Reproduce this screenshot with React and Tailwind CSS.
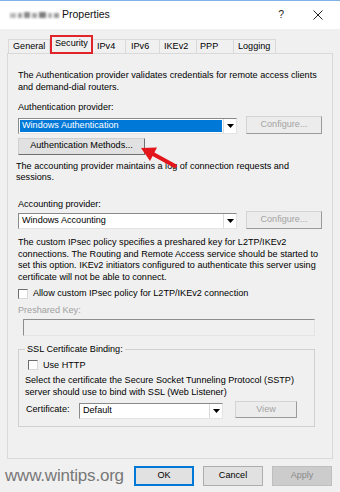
import React from "react";

const font = "font-['Liberation_Sans',Arial,sans-serif]";

function Check({ className = "" }) {
  return (
    <span
      className={`inline-block w-[10px] h-[10px] bg-white border border-[#6d6d6d] border-r-[#d8d8d8] border-b-[#d8d8d8] shrink-0 ${className}`}
    />
  );
}

function Arrow() {
  return (
    <span className="w-[13px] h-full flex items-center justify-center bg-white border-l border-[#dadada] shrink-0">
      <svg width="7" height="4" viewBox="0 0 7 4">
        <path d="M0 0 H7 L3.5 4 Z" fill="#000" />
      </svg>
    </span>
  );
}

function DisabledBtn({ label, className = "" }) {
  return (
    <div
      className={`flex items-center justify-center bg-[#ececec] border border-[#d4d4d4] border-r-[#9a9a9a] border-b-[#9a9a9a] text-[#a3a3a3] ${className}`}
    >
      {label}
    </div>
  );
}

export default function App() {
  return (
    <div className={`relative w-[340px] h-[492px] overflow-hidden bg-[#f0f0f0] text-[9.1px] leading-[11.5px] text-black ${font}`}>
      {/* title bar */}
      <div className="h-[29px] bg-white border-t border-[#7fb2e5] flex items-center">
        <div className="ml-[10px] flex items-center gap-[2px] w-[50px] blur-[1px]">
          <span className="w-[6px] h-[5px] bg-[#b9b9b9]" />
          <span className="w-[4px] h-[5px] bg-[#9e9e9e]" />
          <span className="w-[6px] h-[6px] bg-[#8a8a8a]" />
          <span className="w-[5px] h-[5px] bg-[#a5a5a5]" />
          <span className="w-[7px] h-[6px] bg-[#7e7e7e]" />
          <span className="w-[4px] h-[5px] bg-[#b0b0b0]" />
          <span className="w-[5px] h-[5px] bg-[#9a9a9a]" />
        </div>
        <span className="ml-[2px] text-[10.5px] text-[#111]">Properties</span>
        <span className="ml-auto mr-[29px] text-[10.5px] text-[#222]">?</span>
        <svg className="mr-[17px]" width="10" height="10" viewBox="0 0 10 10">
          <path d="M0.5 0.5 L9.5 9.5 M9.5 0.5 L0.5 9.5" stroke="#222" strokeWidth="1" />
        </svg>
      </div>

      {/* tabs */}
      <div className="h-[24px] flex items-end pl-[8px]">
        <div className="h-[14px] w-[42px] border border-b-0 border-[#d9d9d9] pl-[4px] flex items-center">General</div>
        <div className="relative z-10 -mb-[1px] h-[19px] w-[43px] border-2 border-[#e0242a] bg-[#f0f0f0] pl-[3px] flex items-start pt-[1px]">Security</div>
        <div className="h-[14px] w-[33px] border border-b-0 border-l-0 border-[#d9d9d9] pl-[4px] flex items-center">IPv4</div>
        <div className="h-[14px] w-[34px] border border-b-0 border-l-0 border-[#d9d9d9] pl-[5px] flex items-center">IPv6</div>
        <div className="h-[14px] w-[37px] border border-b-0 border-l-0 border-[#d9d9d9] pl-[4px] flex items-center">IKEv2</div>
        <div className="h-[14px] w-[37px] border border-b-0 border-l-0 border-[#d9d9d9] pl-[3px] flex items-center">PPP</div>
        <div className="h-[14px] w-[42px] border border-b-0 border-l-0 border-[#d9d9d9] pl-[4px] flex items-center">Logging</div>
      </div>

      {/* panel */}
      <div className="ml-[7px] w-[326px] h-[406px] border border-[#d9d9d9] bg-[#f0f0f0] pl-[10px] pr-[10px] flex flex-col">
        <p className="mt-[16px]">
          The Authentication provider validates credentials for remote access clients
          <br />
          and demand-dial routers.
        </p>
        <p className="mt-[9px]">Authentication provider:</p>
        <div className="mt-[2px] flex items-end h-[18px]">
          <div className="w-[219px] h-[16px] flex bg-white border border-[#8a8a8a] border-r-[#e3e3e3] border-b-[#e3e3e3]">
            <div className="flex-1 m-[1px] bg-[#0078d7] text-white pl-[2px] flex items-center">Windows Authentication</div>
            <Arrow />
          </div>
          <DisabledBtn label="Configure..." className="ml-[9px] w-[76px] h-[18px]" />
        </div>
        <div className="mt-[4px] w-[127px] h-[17px] bg-[#e1e1e1] border border-[#d0d0d0] border-r-[#6f6f6f] border-b-[#6f6f6f] flex items-center justify-center">
          Authentication Methods...
        </div>
        <p className="mt-[6px] -ml-[2px]">
          The accounting provider maintains a log of connection requests and
          <br />
          sessions.
        </p>
        <p className="mt-[15px]">Accounting provider:</p>
        <div className="mt-[1px] flex items-end h-[18px]">
          <div className="w-[219px] h-[16px] flex bg-white border border-[#8a8a8a] border-r-[#e3e3e3] border-b-[#e3e3e3]">
            <div className="flex-1 pl-[3px] flex items-center">Windows Accounting</div>
            <Arrow />
          </div>
          <DisabledBtn label="Configure..." className="ml-[9px] w-[76px] h-[18px]" />
        </div>
        <p className="mt-[8px]">
          The custom IPsec policy specifies a preshared key for L2TP/IKEv2
          <br />
          connections. The Routing and Remote Access service should be started to
          <br />
          set this option. IKEv2 initiators configured to authenticate this server using
          <br />
          certificate will not be able to connect.
        </p>
        <div className="mt-[5px] flex items-center h-[11.5px]">
          <Check />
          <span className="ml-[5px]">Allow custom IPsec policy for L2TP/IKEv2 connection</span>
        </div>
        <p className="mt-[5px] text-[#a0a0a0]">Preshared Key:</p>
        <div className="mt-[3px] ml-[5px] w-[292px] h-[17px] bg-[#f0f0f0] border border-[#8d8d8d] border-r-[#e4e4e4] border-b-[#e4e4e4]" />

        <fieldset className="mt-[8px] w-[297px] border border-[#d0d0d0] pl-[6px] pr-[6px] pb-[8px]">
          <legend className="px-[2px]">SSL Certificate Binding:</legend>
          <div className="mt-[4px] ml-[3px] flex items-center h-[11.5px]">
            <Check />
            <span className="ml-[5px]">Use HTTP</span>
          </div>
          <p className="mt-[4px]">
            Select the certificate the Secure Socket Tunneling Protocol (SSTP)
            <br />
            server should use to bind with SSL (Web Listener)
          </p>
          <div className="mt-[3px] flex items-center h-[17px]">
            <span className="ml-[1px] w-[53px]">Certificate:</span>
            <div className="w-[144px] h-[16px] flex bg-white border border-[#8a8a8a] border-r-[#e3e3e3] border-b-[#e3e3e3] mt-[2px]">
              <div className="flex-1 pl-[3px] flex items-center">Default</div>
              <Arrow />
            </div>
            <DisabledBtn label="View" className="ml-[12px] w-[62px] h-[17px]" />
          </div>
        </fieldset>
      </div>

      {/* bottom row */}
      <div className="mt-[7px] h-[20px] flex items-center pr-[8px]">
        <span className="ml-[5px] text-[17px] leading-[20px] text-[#787878] tracking-[-0.2px]">www.wintips.org</span>
        <div className="ml-auto w-[60px] h-[20px] bg-[#e1e1e1] border-2 border-[#0078d7] flex items-center justify-center">OK</div>
        <div className="ml-[9px] w-[60px] h-[20px] bg-[#e1e1e1] border border-[#adadad] flex items-center justify-center">Cancel</div>
        <div className="ml-[9px] w-[60px] h-[20px] bg-[#cccccc] border border-[#bfbfbf] text-[#8a8a8a] flex items-center justify-center">Apply</div>
      </div>

      {/* red annotation arrow */}
      <svg className="absolute left-0 top-0 pointer-events-none" width="340" height="492">
        <path d="M153 154 L175 166" stroke="#e3161c" strokeWidth="4" strokeLinecap="round" />
        <path d="M141 148 L157 147.5 L150 161 Z" fill="#e3161c" />
      </svg>
    </div>
  );
}
